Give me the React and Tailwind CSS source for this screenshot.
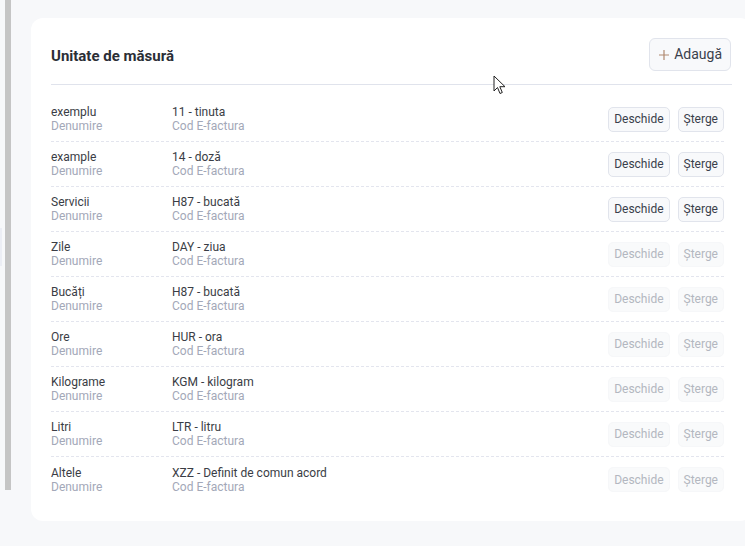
import React from "react";

const rows = [
  { name: "exemplu", code: "11 - tinuta", active: true },
  { name: "example", code: "14 - doză", active: true },
  { name: "Servicii", code: "H87 - bucată", active: true },
  { name: "Zile", code: "DAY - ziua", active: false },
  { name: "Bucăți", code: "H87 - bucată", active: false },
  { name: "Ore", code: "HUR - ora", active: false },
  { name: "Kilograme", code: "KGM - kilogram", active: false },
  { name: "Litri", code: "LTR - litru", active: false },
  { name: "Altele", code: "XZZ - Definit de comun acord", active: false },
];

const RowButton = ({ label, active }) => (
  <button
    className={
      active
        ? "h-[25px] px-[5px] rounded-[5px] border border-[#e1e4ec] bg-[#f8f9fb] text-[#3a3f4b] text-[12px]"
        : "h-[25px] px-[5px] rounded-[5px] border border-[#f6f7f9] bg-[#f9fafb] text-[#b3b7c0] text-[12px]"
    }
  >
    {label}
  </button>
);

export default function App() {
  return (
    <div
      className="relative w-full h-[546px] bg-[#f7f8fa] flex overflow-hidden"
      style={{ fontFamily: "Roboto, 'Noto Sans', sans-serif" }}
    >
      {/* left scrollbar */}
      <div className="w-[5px] shrink-0" />
      <div className="w-[6px] h-[490px] shrink-0 bg-[#c5c5c5]" />
      <div className="absolute left-0 top-[228px] w-[2px] h-[38px] bg-[#eceef5]" />

      {/* card */}
      <div className="ml-[20px] mt-[18px] w-[721px] h-[503px] shrink-0 bg-white rounded-[12px] px-[20px] pt-[20px] pb-[20px]">
        <div className="flex items-center justify-between pb-[13px] border-b border-[#e0e3ec]">
          <h2 className="mt-[3px] text-[15px] font-bold text-[#2b2e36]">Unitate de măsură</h2>
          <button className="h-[33px] px-[8px] mr-[1px] flex items-center gap-[4px] rounded-[6px] border border-[#e1e4ec] bg-[#f8f9fb] text-[#3a3f4b] text-[14px]">
            <svg width="12" height="12" viewBox="0 0 12 12" fill="none">
              <path d="M6 1v10M1 6h10" stroke="#b08970" strokeWidth="1.2" />
            </svg>
            Adaugă
          </button>
        </div>

        <div className="mt-[12px] pr-[8px]">
          {rows.map((r, i) => (
            <div
              key={i}
              className={
                "h-[45px] flex items-center " +
                (i < rows.length - 1 ? "border-b border-dashed border-[#e3e5ee]" : "")
              }
            >
              <div className="w-[121px] text-[12px] leading-[14px]">
                <div className="text-[#3a3d45]">{r.name}</div>
                <div className="text-[#a3a8b8]">Denumire</div>
              </div>
              <div className="flex-1 text-[12px] leading-[14px]">
                <div className="text-[#3a3d45]">{r.code}</div>
                <div className="text-[#a3a8b8]">Cod E-factura</div>
              </div>
              <div className="flex gap-[8px]">
                <RowButton label="Deschide" active={r.active} />
                <RowButton label="Șterge" active={r.active} />
              </div>
            </div>
          ))}
        </div>
      </div>

      {/* mouse cursor */}
      <svg className="absolute left-[493px] top-[75px]" width="14" height="21" viewBox="0 0 14 21">
        <path d="M1 1 L1 16 L4.5 12.5 L7 18.5 L9.3 17.5 L6.8 11.7 L12 11.7 Z" fill="#fff" stroke="#222" strokeWidth="1" strokeLinejoin="round" />
      </svg>
    </div>
  );
}
